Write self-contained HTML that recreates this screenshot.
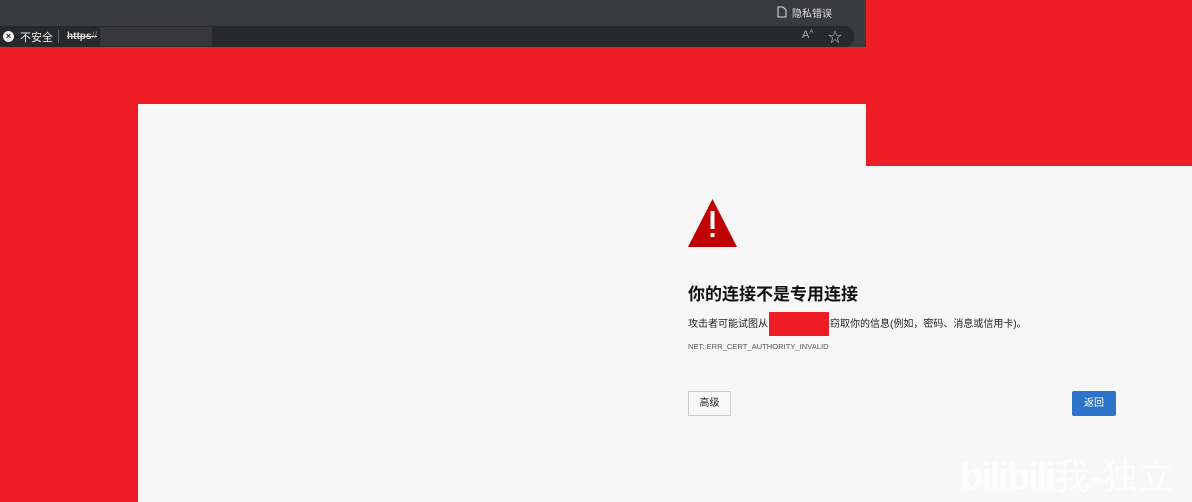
<!DOCTYPE html>
<html style="overflow:hidden;height:502px"><head><meta charset="utf-8"><style>
body{margin:0;width:1192px;height:502px;position:relative;overflow:hidden;background:#ee1c25;font-family:"Liberation Sans","Noto Sans CJK SC",sans-serif}
.a{position:absolute}
</style></head><body>
<div class="a" style="left:0;top:0;width:866px;height:47px;background:#3a3b3f"></div>
<div class="a" style="left:-10px;top:26px;width:864px;height:21px;background:#28292b;border-radius:10px"></div>
<div class="a" style="left:100px;top:27px;width:112px;height:19px;background:#38383b"></div>
<div class="a" style="left:3px;top:31px;width:11px;height:11px;border-radius:50%;background:#eee;color:#28292b;font-size:9px;line-height:11px;text-align:center;font-weight:bold">×</div>
<div class="a" style="left:20px;top:29px;color:#eee;font-size:11px">不安全</div>
<div class="a" style="left:58px;top:30px;width:1px;height:13px;background:#666"></div>
<div class="a" style="left:67px;top:31px;color:#ddd;font-size:10px;font-weight:bold;text-decoration:line-through">https<span style="font-weight:normal;color:#888">//</span></div>
<div class="a" style="left:802px;top:29px;color:#aaa;font-size:11px">A<sup style="font-size:6px">A</sup></div>
<div class="a" style="left:828px;top:27px;color:#bbb;font-size:14px">☆</div>
<svg class="a" style="left:777px;top:6px" width="10" height="12"><path d="M1 1h5l3 3v7H1z" fill="none" stroke="#ddd" stroke-width="1"/></svg>
<div class="a" style="left:792px;top:5px;color:#ddd;font-size:10px">隐私错误</div>
<div class="a" style="left:138px;top:104px;width:728px;height:398px;background:#f7f7f7"></div>
<div class="a" style="left:866px;top:166px;width:326px;height:336px;background:#f7f7f7"></div>
<svg class="a" style="left:688px;top:199px" width="49" height="48"><path d="M24.5 0L49 48H0z" fill="#c00000"/><rect x="22.5" y="12" width="4" height="18" fill="#fff"/><rect x="22.5" y="34" width="4" height="4" fill="#fff"/></svg>
<div class="a" style="left:688px;top:280px;font-size:17px;font-weight:bold;color:#111">你的连接不是专用连接</div>
<div class="a" style="left:688px;top:315px;font-size:10px;color:#222">攻击者可能试图从<span style="display:inline-block;width:60px;height:24px;background:#ee1c25;vertical-align:middle;margin:-8px 1px"></span>窃取你的信息(例如，密码、消息或信用卡)。</div>
<div class="a" style="left:688px;top:342px;font-size:7.6px;color:#555">NET::ERR_CERT_AUTHORITY_INVALID</div>
<div class="a" style="left:688px;top:391px;width:41px;height:23px;border:1px solid #ccc;background:#f8f8f8;font-size:10px;line-height:23px;text-align:center;color:#222">高级</div>
<div class="a" style="left:1072px;top:391px;width:44px;height:25px;background:#2d73c9;border-radius:2px;font-size:10px;line-height:25px;text-align:center;color:#fff">返回</div>
<div class="a" style="left:960px;top:452px;height:50px;overflow:hidden;font-size:38px;line-height:50px;font-weight:bold;color:#fff;opacity:0.8;letter-spacing:-2px">bilibili<span style="font-weight:normal;font-size:36px;letter-spacing:0">我-独立</span></div>
</body></html>
